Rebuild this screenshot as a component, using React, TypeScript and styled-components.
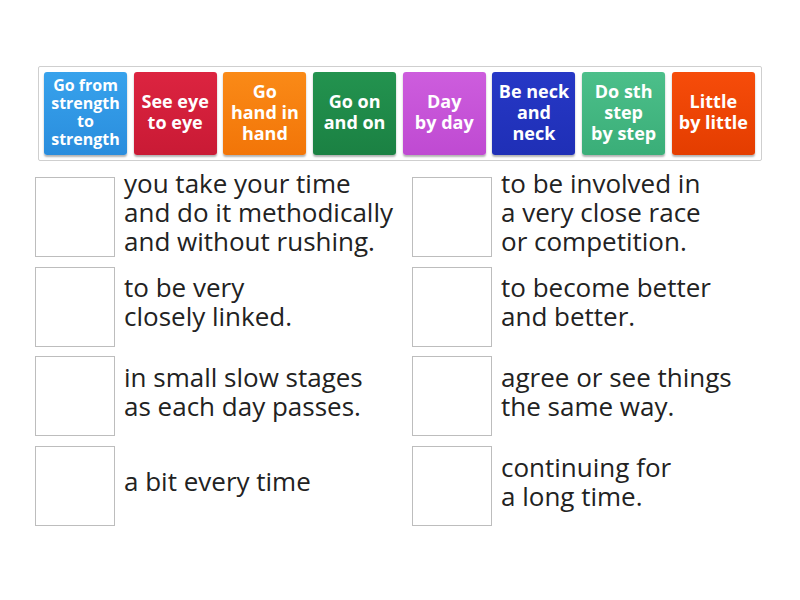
import React from "react";
import styled, { createGlobalStyle } from "styled-components";

const Global = createGlobalStyle`
  html, body { margin: 0; padding: 0; background: #fff; }
  body { font-family: "Open Sans", "Noto Sans", sans-serif; }
`;

const Page = styled.div`
  width: 800px;
  height: 600px;
  padding-top: 66px;
  box-sizing: border-box;
`;

const Bank = styled.div`
  margin-left: 38px;
  width: 724px;
  box-sizing: border-box;
  border: 1px solid #cfcfcf;
  border-radius: 2px;
  padding: 5px;
  display: flex;
  gap: 6.7px;
`;

const Tile = styled.div<{ $c: string; $d: string; $small?: boolean }>`
  width: 83px;
  height: 83px;
  flex: none;
  border-radius: 3px;
  background: linear-gradient(to bottom, ${(p) => p.$c}, ${(p) => p.$d});
  box-shadow: 0 2px 2px rgba(0, 0, 0, 0.3);
  color: #fff;
  font-weight: 700;
  font-size: ${(p) => (p.$small ? "16px" : "18px")};
  line-height: ${(p) => (p.$small ? "18px" : "21px")};
  text-align: center;
  display: flex;
  align-items: center;
  justify-content: center;
  padding: 0 1px 3px;
  box-sizing: border-box;
`;

const Grid = styled.div`
  margin-top: 16px;
  margin-left: 35px;
  display: grid;
  grid-template-columns: 377px 377px;
  row-gap: 9.7px;
`;

const Item = styled.div`
  display: flex;
  align-items: center;
  gap: 9px;
  height: 80px;
`;

const Slot = styled.div`
  width: 80px;
  height: 80px;
  flex: none;
  box-sizing: border-box;
  border: 1px solid #bdbdbd;
  background: #fff;
`;

const Def = styled.div`
  font-size: 26px;
  line-height: 29px;
  color: #222;
  margin-top: -9px;
  white-space: nowrap;
`;

const tiles: [string, string, string[]][] = [
  ["#37a2ec", "#2a8ddd", ["Go from", "strength", "to", "strength"]],
  ["#dc2440", "#c91a35", ["See eye", "to eye"]],
  ["#fa8a17", "#f27508", ["Go", "hand in", "hand"]],
  ["#23934f", "#1b8143", ["Go on", "and on"]],
  ["#cd5ddd", "#bf4ad2", ["Day", "by day"]],
  ["#2638c6", "#1f2fb6", ["Be neck", "and", "neck"]],
  ["#4cbf8a", "#3aae78", ["Do sth", "step", "by step"]],
  ["#f64c0a", "#e43d00", ["Little", "by little"]],
];

const defs: string[][] = [
  ["you take your time", "and do it methodically", "and without rushing."],
  ["to be involved in", "a very close race", "or competition."],
  ["to be very", "closely linked."],
  ["to become better", "and better."],
  ["in small slow stages", "as each day passes."],
  ["agree or see things", "the same way."],
  ["a bit every time"],
  ["continuing for", "a long time."],
];

export default function App() {
  return (
    <Page>
      <Global />
      <Bank>
        {tiles.map(([c, d, lines], i) => (
          <Tile key={i} $c={c} $d={d} $small={lines.length > 3}>
            <div>
              {lines.map((l, j) => (
                <div key={j}>{l}</div>
              ))}
            </div>
          </Tile>
        ))}
      </Bank>
      <Grid>
        {defs.map((lines, i) => (
          <Item key={i}>
            <Slot />
            <Def>
              {lines.map((l, j) => (
                <div key={j}>{l}</div>
              ))}
            </Def>
          </Item>
        ))}
      </Grid>
    </Page>
  );
}
